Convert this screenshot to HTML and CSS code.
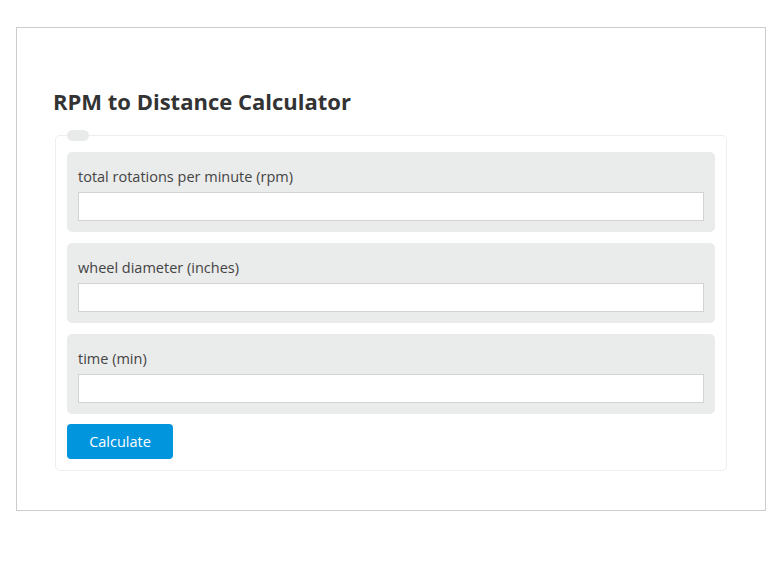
FILE: index.html
```html
<!DOCTYPE html>
<html lang="en">
<head>
    <meta charset="UTF-8">
    <meta name="viewport" content="width=device-width, initial-scale=1.0">
    <title>RPM to Distance Calculator</title>
    <link rel="stylesheet" href="styles.css">
</head>
<body>
    <div class="calc-box">
        <h2>RPM to Distance Calculator</h2>
        <fieldset class="calc-form">
            <legend></legend>
            <div class="field">
                <label for="rpm">total rotations per minute (rpm)</label>
                <input type="text" id="rpm">
            </div>
            <div class="field">
                <label for="diameter">wheel diameter (inches)</label>
                <input type="text" id="diameter">
            </div>
            <div class="field">
                <label for="time">time (min)</label>
                <input type="text" id="time">
            </div>
            <button type="button">Calculate</button>
        </fieldset>
    </div>
</body>
</html>
```

FILE: styles.css
```css
body {
    margin: 0;
    font-family: "Open Sans", Arial, sans-serif;
    color: #444;
    background: white;
}
.calc-box {
    width: 750px;
    height: 484px;
    margin: 27px 0 0 16px;
    border: 1px solid #ccc;
    padding: 0 38px 0 38px;
    box-sizing: border-box;
}
.calc-box h2 {
    font-size: 22px;
    font-weight: bold;
    color: #333;
    margin: 58px 0 0 -2px;
    line-height: 30px;
}
.calc-form {
    margin: 14px 0 0 0;
    padding: 11px 11px 11px 11px;
    border: 1px solid #eee;
    border-radius: 5px;
}
.calc-form legend {
    width: 22px;
    height: 11px;
    padding: 0;
    margin-left: 0;
    background: #e9eaea;
    border-radius: 6px;
}
.field {
    background: #eaebeb;
    border-radius: 5px;
    padding: 11px 11px 11px 11px;
    margin-bottom: 11px;
}
.field:last-of-type {
    margin-bottom: 10px;
}
.field label {
    display: block;
    font-size: 14.5px;
    line-height: 20px;
    margin: 4px 0 5px 0;
}
.field input {
    display: block;
    width: 100%;
    height: 29px;
    box-sizing: border-box;
    border: 1px solid #d3d3d3;
    background: white;
    margin: 0;
}
button {
    display: block;
    background-color: #0095dd;
    color: white;
    border: none;
    border-radius: 4px;
    font-family: "Open Sans", Arial, sans-serif;
    font-size: 14.5px;
    width: 106px;
    height: 35px;
    padding: 0;
    margin: 0;
    cursor: pointer;
}
```
